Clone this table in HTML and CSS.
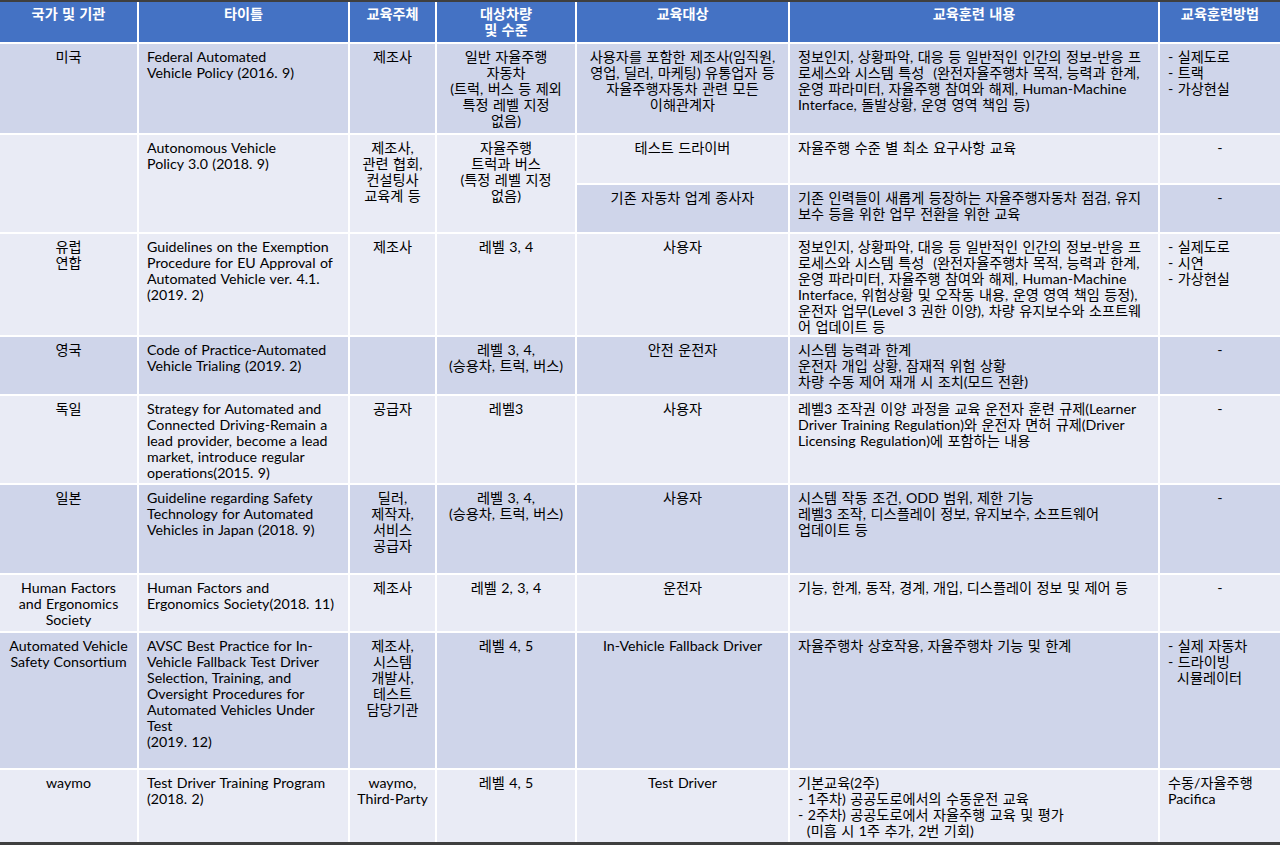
FILE: index.html
```html
<!DOCTYPE html>
<html lang="ko">
<head>
<meta charset="utf-8">
<title>자율주행 교육훈련 비교</title>
<link rel="stylesheet" href="styles.css">
</head>
<body>
<table class="grid">
  <colgroup>
    <col class="w1"><col class="w2"><col class="w3"><col class="w4"><col class="w5"><col class="w6"><col class="w7">
  </colgroup>
  <thead>
    <tr class="h-head">
      <th>국가 및 기관</th>
      <th>타이틀</th>
      <th>교육주체</th>
      <th>대상차량<br>및 수준</th>
      <th>교육대상</th>
      <th>교육훈련 내용</th>
      <th>교육훈련방법</th>
    </tr>
  </thead>
  <tbody>
    <tr class="dark h-us">
      <td class="c">미국</td>
      <td class="l">Federal Automated<br>Vehicle Policy (2016. 9)</td>
      <td class="c">제조사</td>
      <td class="c">일반 자율주행<br>자동차<br>(트럭, 버스 등 제외<br>특정 레벨 지정<br>없음)</td>
      <td class="c">사용자를 포함한 제조사(임직원,<br>영업, 딜러, 마케팅) 유통업자 등<br>자율주행자동차 관련 모든<br>이해관계자</td>
      <td class="l">정보인지, 상황파악, 대응 등 일반적인 인간의 정보-반응 프<br>로세스와 시스템 특성&nbsp; (완전자율주행차 목적, 능력과 한계,<br>운영 파라미터, 자율주행 참여와 해제, Human-Machine<br>Interface, 돌발상황, 운영 영역 책임 등)</td>
      <td class="l">- 실제도로<br>- 트랙<br>- 가상현실</td>
    </tr>
    <tr class="light h-av1">
      <td class="c" rowspan="2"></td>
      <td class="l" rowspan="2">Autonomous Vehicle<br>Policy 3.0 (2018. 9)</td>
      <td class="c" rowspan="2">제조사,<br>관련 협회,<br>컨설팅사<br>교육계 등</td>
      <td class="c" rowspan="2">자율주행<br>트럭과 버스<br>(특정 레벨 지정<br>없음)</td>
      <td class="c">테스트 드라이버</td>
      <td class="l">자율주행 수준 별 최소 요구사항 교육</td>
      <td class="c">-</td>
    </tr>
    <tr class="dark h-av2">
      <td class="c">기존 자동차 업계 종사자</td>
      <td class="l">기존 인력들이 새롭게 등장하는 자율주행자동차 점검, 유지<br>보수 등을 위한 업무 전환을 위한 교육</td>
      <td class="c">-</td>
    </tr>
    <tr class="light h-eu">
      <td class="c">유럽<br>연합</td>
      <td class="l">Guidelines on the Exemption<br>Procedure for EU Approval of<br>Automated Vehicle ver. 4.1.<br>(2019. 2)</td>
      <td class="c">제조사</td>
      <td class="c">레벨 3, 4</td>
      <td class="c">사용자</td>
      <td class="l">정보인지, 상황파악, 대응 등 일반적인 인간의 정보-반응 프<br>로세스와 시스템 특성&nbsp; (완전자율주행차 목적, 능력과 한계,<br>운영 파라미터, 자율주행 참여와 해제, Human-Machine<br>Interface, 위험상황 및 오작동 내용, 운영 영역 책임 등정),<br>운전자 업무(Level 3 권한 이양), 차량 유지보수와 소프트웨<br>어 업데이트 등</td>
      <td class="l">- 실제도로<br>- 시연<br>- 가상현실</td>
    </tr>
    <tr class="dark h-uk">
      <td class="c">영국</td>
      <td class="l">Code of Practice-Automated<br>Vehicle Trialing (2019. 2)</td>
      <td class="c"></td>
      <td class="c">레벨 3, 4,<br>(승용차, 트럭, 버스)</td>
      <td class="c">안전 운전자</td>
      <td class="l">시스템 능력과 한계<br>운전자 개입 상황, 잠재적 위험 상황<br>차량 수동 제어 재개 시 조치(모드 전환)</td>
      <td class="c">-</td>
    </tr>
    <tr class="light h-de">
      <td class="c">독일</td>
      <td class="l">Strategy for Automated and<br>Connected Driving-Remain a<br>lead provider, become a lead<br>market, introduce regular<br>operations(2015. 9)</td>
      <td class="c">공급자</td>
      <td class="c">레벨3</td>
      <td class="c">사용자</td>
      <td class="l">레벨3 조작권 이양 과정을 교육 운전자 훈련 규제(Learner<br>Driver Training Regulation)와 운전자 면허 규제(Driver<br>Licensing Regulation)에 포함하는 내용</td>
      <td class="c">-</td>
    </tr>
    <tr class="dark h-jp">
      <td class="c">일본</td>
      <td class="l">Guideline regarding Safety<br>Technology for Automated<br>Vehicles in Japan (2018. 9)</td>
      <td class="c">딜러,<br>제작자,<br>서비스<br>공급자</td>
      <td class="c">레벨 3, 4,<br>(승용차, 트럭, 버스)</td>
      <td class="c">사용자</td>
      <td class="l">시스템 작동 조건, ODD 범위, 제한 기능<br>레벨3 조작, 디스플레이 정보, 유지보수, 소프트웨어<br>업데이트 등</td>
      <td class="c">-</td>
    </tr>
    <tr class="light h-hf">
      <td class="c">Human Factors<br>and Ergonomics<br>Society</td>
      <td class="l">Human Factors and<br>Ergonomics Society(2018. 11)</td>
      <td class="c">제조사</td>
      <td class="c">레벨 2, 3, 4</td>
      <td class="c">운전자</td>
      <td class="l">기능, 한계, 동작, 경계, 개입, 디스플레이 정보 및 제어 등</td>
      <td class="c">-</td>
    </tr>
    <tr class="dark h-avsc">
      <td class="c">Automated Vehicle<br>Safety Consortium</td>
      <td class="l">AVSC Best Practice for In-<br>Vehicle Fallback Test Driver<br>Selection, Training, and<br>Oversight Procedures for<br>Automated Vehicles Under<br>Test<br>(2019. 12)</td>
      <td class="c">제조사,<br>시스템<br>개발사,<br>테스트<br>담당기관</td>
      <td class="c">레벨 4, 5</td>
      <td class="c">In-Vehicle Fallback Driver</td>
      <td class="l">자율주행차 상호작용, 자율주행차 기능 및 한계</td>
      <td class="l">- 실제 자동차<br>- 드라이빙<br>&nbsp;&nbsp;시뮬레이터</td>
    </tr>
    <tr class="light h-wm">
      <td class="c">waymo</td>
      <td class="l">Test Driver Training Program<br>(2018. 2)</td>
      <td class="c">waymo,<br>Third-Party</td>
      <td class="c">레벨 4, 5</td>
      <td class="c">Test Driver</td>
      <td class="l">기본교육(2주)<br>- 1주차) 공공도로에서의 수동운전 교육<br>- 2주차) 공공도로에서 자율주행 교육 및 평가<br>&nbsp;&nbsp;(미흡 시 1주 추가, 2번 기회)</td>
      <td class="l">수동/자율주행<br>Pacifica</td>
    </tr>
  </tbody>
</table>
</body>
</html>
```

FILE: styles.css
```css
html, body {
  margin: 0;
  padding: 0;
}

body {
  width: 1280px;
  height: 845px;
  overflow: hidden;
  background: #3f3f3f;
  font-family: Lato, "Noto Sans CJK KR", sans-serif;
  font-size: 14.2px;
  line-height: 16px;
  word-spacing: 0.8px;
  color: #000;
}

.grid {
  margin-top: 2px;
  width: 1280px;
  table-layout: fixed;
  border-collapse: collapse;
  border-style: hidden;
}

.w1 { width: 138px; }
.w2 { width: 211px; }
.w3 { width: 87px; }
.w4 { width: 140px; }
.w5 { width: 213px; }
.w6 { width: 370px; }
.w7 { width: 121px; }

.grid th,
.grid td {
  border: 2px solid #ffffff;
  vertical-align: top;
  white-space: nowrap;
  overflow: hidden;
  padding: 5px 0 0 0;
}

.grid th {
  background: #4472c4;
  color: #ffffff;
  font-weight: 700;
  text-align: center;
  padding-top: 4px;
}

.dark td { background: #cfd5ea; }
.light td { background: #e9ebf5; }

.c { text-align: center; }
.l { text-align: left; padding-left: 8px !important; }

.h-head { height: 41px; }
.h-us { height: 91px; }
.h-av1 { height: 50px; }
.h-av2 { height: 49px; }
.h-eu { height: 103px; }
.h-uk { height: 59px; }
.h-de { height: 89px; }
.h-jp { height: 90px; }
.h-hf { height: 58px; }
.h-avsc { height: 137px; }
.h-wm { height: 73px; }
```
